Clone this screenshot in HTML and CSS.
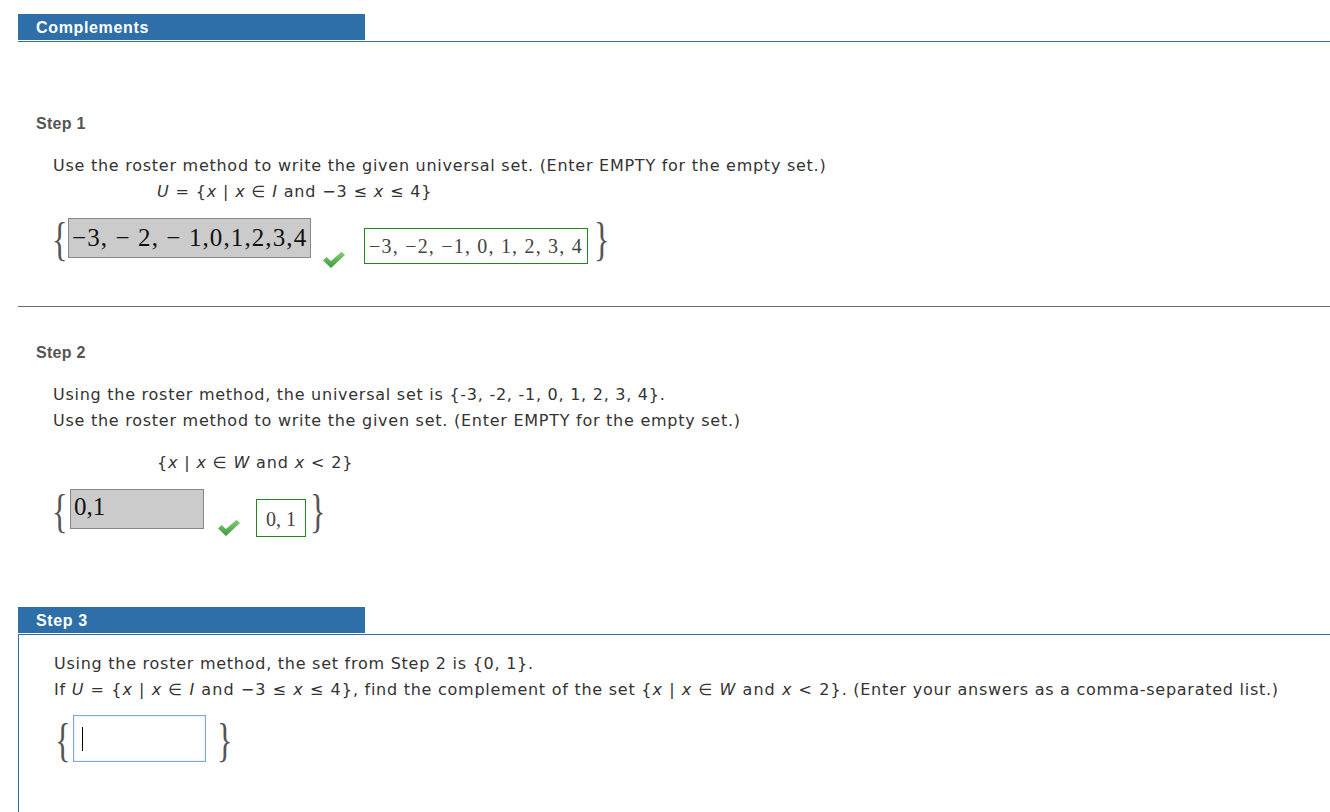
FILE: index.html
```html
<!DOCTYPE html>
<html>
<head>
<meta charset="utf-8">
<link rel="stylesheet" href="styles.css">
</head>
<body>
<div class="page">
  <div class="tab-head"><span class="tab">Complements</span></div>

  <section class="step step-plain step-first">
    <div class="step-label">Step 1</div>
    <div class="question">
      <p class="q">Use the roster method to write the given universal set. (Enter EMPTY for the empty set.)</p>
      <p class="math-line"><i>U</i> = {<i>x</i> | <i>x</i> ∈ <i class="cap">I</i> and −3 ≤ <i>x</i> ≤ 4}</p>
      <div class="answer-row row1">
        <span class="brace">{</span>
        <span class="ans-box box1">−3, − 2, − 1,0,1,2,3,4</span>
        <svg class="check" viewBox="0 0 24 18" width="24" height="18"><defs><linearGradient id="g1" x1="0" y1="0" x2="0" y2="1"><stop offset="0" stop-color="#86cf7c"/><stop offset="1" stop-color="#3d9a3a"/></linearGradient></defs><path d="M1 9.5 L4.5 6 L9 10 L19.5 0.8 L23 4 L9 17 Z" fill="url(#g1)"/></svg>
        <span class="correct box1c">−3, −2, −1, 0, 1, 2, 3, 4</span>
        <span class="brace">}</span>
      </div>
    </div>
  </section>

  <hr class="sep">

  <section class="step step-plain step-second">
    <div class="step-label">Step 2</div>
    <div class="question">
      <p class="q">Using the roster method, the universal set is {-3, -2, -1, 0, 1, 2, 3, 4}.</p>
      <p class="q">Use the roster method to write the given set. (Enter EMPTY for the empty set.)</p>
      <p class="math-line math2">{<i>x</i> | <i>x</i> ∈ <i>W</i> and <i>x</i> &lt; 2}</p>
      <div class="answer-row row2">
        <span class="brace">{</span>
        <span class="ans-box box2">0,1</span>
        <svg class="check" viewBox="0 0 24 18" width="24" height="18"><defs><linearGradient id="g2" x1="0" y1="0" x2="0" y2="1"><stop offset="0" stop-color="#86cf7c"/><stop offset="1" stop-color="#3d9a3a"/></linearGradient></defs><path d="M1 9.5 L4.5 6 L9 10 L19.5 0.8 L23 4 L9 17 Z" fill="url(#g2)"/></svg>
        <span class="correct box2c">0, 1</span>
        <span class="brace">}</span>
      </div>
    </div>
  </section>

  <div class="tab-head tab-step3"><span class="tab">Step 3</span></div>
  <section class="step step-active">
    <div class="question q3">
      <p class="q">Using the roster method, the set from Step 2 is {0, 1}.</p>
      <p class="q">If <span class="m"><i>U</i> = {<i>x</i> | <i>x</i> ∈ <i class="cap">I</i> and −3 ≤ <i>x</i> ≤ 4}</span>, find the complement of the set <span class="m">{<i>x</i> | <i>x</i> ∈ <i>W</i> and <i>x</i> &lt; 2}</span>. (Enter your answers as a comma-separated list.)</p>
      <div class="answer-row row3">
        <span class="brace">{</span>
        <span class="input-box"><span class="caret"></span></span>
        <span class="brace">}</span>
      </div>
    </div>
  </section>
</div>
</body>
</html>
```

FILE: styles.css
```css
html, body {
  margin: 0;
  padding: 0;
  background: #fff;
}
body {
  font-family: "DejaVu Sans", Verdana, sans-serif;
  color: #333;
  width: 1330px;
  height: 812px;
  overflow: hidden;
}
.page {
  padding: 14px 0 0 18px;
}
.tab-head {
  border-bottom: 1px solid #2e6da6;
  height: 27px;
}
.tab {
  display: inline-block;
  box-sizing: border-box;
  width: 347px;
  height: 26px;
  background: #2e6ea9;
  color: #fff;
  font-family: "Liberation Sans", Arial, sans-serif;
  font-weight: bold;
  font-size: 16px;
  line-height: 27px;
  padding-left: 18px;
  letter-spacing: 0.65px;
}
.step-label {
  font-family: "Liberation Sans", Arial, sans-serif;
  font-weight: bold;
  font-size: 16px;
  color: #555;
  padding-left: 18px;
  letter-spacing: 0.3px;
  line-height: 20px;
}
.step-first {
  padding-top: 72px;
}
.step-second {
  padding-top: 36px;
}
.question {
  padding-left: 35px;
}
.q {
  margin: 0;
  font-size: 16px;
  line-height: 26px;
  color: #333;
  letter-spacing: 0.74px;
}
.m {
  letter-spacing: 1.05px;
}
.step-first .question {
  padding-top: 19px;
}
.step-second .question {
  padding-top: 19px;
}
.math-line {
  margin: 0;
  font-size: 16px;
  line-height: 26px;
  padding-left: 104px;
  letter-spacing: 0.85px;
}
.math2 {
  margin-top: 16px;
}
i {
  font-style: italic;
}
.answer-row {
  display: flex;
  align-items: flex-start;
}
.brace {
  font-family: "Liberation Serif", "DejaVu Serif", serif;
  font-size: 46px;
  line-height: 40px;
  color: #555;
  display: inline-block;
  transform: scaleX(0.7);
  width: 13px;
  text-align: center;
}
.row1 {
  margin-top: 13px;
  margin-left: -3px;
}
.row1 .brace {
  margin-top: 2px;
}
.ans-box {
  box-sizing: border-box;
  background: #cbcbcb;
  border: 1px solid #888;
  font-family: "Liberation Serif", "Times New Roman", serif;
  color: #111;
  font-size: 25px;
  white-space: nowrap;
  padding-left: 3px;
}
.box1 {
  width: 243px;
  height: 40px;
  line-height: 38px;
  margin-left: 5px;
  letter-spacing: 1.1px;
  overflow: hidden;
}
.check {
  display: block;
}
.row1 .check {
  margin: 33px 0 0 11px;
}
.correct {
  box-sizing: border-box;
  border: 1px solid #1e8a1e;
  font-family: "Liberation Serif", "Times New Roman", serif;
  color: #444;
  font-size: 20px;
  white-space: nowrap;
  text-align: center;
}
.box1c {
  width: 224px;
  height: 36px;
  line-height: 34px;
  margin: 10px 4px 0 18px;
  letter-spacing: 1.2px;
}
.sep {
  border: 0;
  border-top: 1px solid #6c6c6c;
  margin: 37px 0 0 0;
  height: 0;
}
.row2 {
  margin-top: 13px;
  margin-left: -3px;
}
.row2 .brace {
  margin-top: 3px;
}
.box2 {
  width: 134px;
  height: 40px;
  line-height: 34px;
  margin-left: 7px;
}
.row2 .check {
  margin: 30px 0 0 13px;
}
.box2c {
  width: 50px;
  height: 38px;
  line-height: 38px;
  margin: 10px 2px 0 15px;
}
.tab-step3 {
  margin-top: 70px;
}
.step-active {
  border-left: 1px solid #2e6da6;
  height: 200px;
}
.q3 {
  padding-top: 16px;
}
.row3 {
  margin-top: 12px;
  margin-left: -1px;
}
.row3 .brace {
  margin-top: 6px;
}
.input-box {
  box-sizing: border-box;
  display: block;
  width: 133px;
  height: 47px;
  border: 1px solid #7ea7d8;
  box-shadow: inset 0 0 2px #b9d2ee;
  margin: 0 9px 0 7px;
  position: relative;
  background: #fff;
}
.caret {
  position: absolute;
  left: 8px;
  top: 11px;
  width: 1px;
  height: 24px;
  background: #000;
}
```
